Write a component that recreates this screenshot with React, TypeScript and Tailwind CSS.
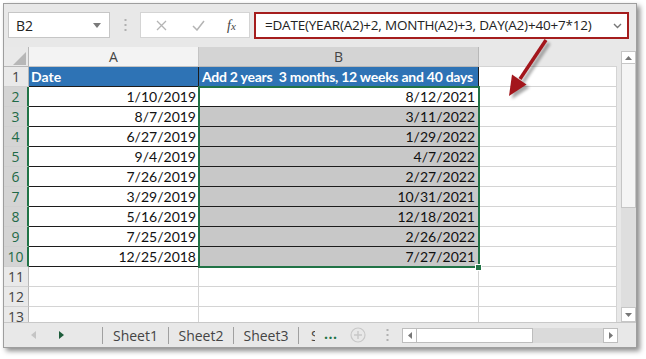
import React from "react"

const ui = { fontFamily: '"Open Sans", "Noto Sans", sans-serif' }
const cell = { fontFamily: 'Lato, "Liberation Sans", sans-serif' }

const rows: [string, string][] = [
  ["1/10/2019", "8/12/2021"],
  ["8/7/2019", "3/11/2022"],
  ["6/27/2019", "1/29/2022"],
  ["9/4/2019", "4/7/2022"],
  ["7/26/2019", "2/27/2022"],
  ["3/29/2019", "10/31/2021"],
  ["5/16/2019", "12/18/2021"],
  ["7/25/2019", "2/26/2022"],
  ["12/25/2018", "7/27/2021"],
]

function Toolbar() {
  return (
    <div className="h-[43px] shrink-0 flex items-start pt-[8px] pl-[4px]" style={ui}>
      {/* name box */}
      <div className="w-[102px] h-[26px] bg-white border border-[#c6c6c6] flex items-center justify-between pl-[7px] pr-[8px]">
        <span className="text-[14px] text-[#222]">B2</span>
        <svg width="8" height="5" viewBox="0 0 8 5"><path d="M0 0h8L4 5z" fill="#7a7a7a" /></svg>
      </div>
      <div className="w-[30px] h-[26px] flex items-center justify-center">
        <svg width="3" height="12" viewBox="0 0 3 12">
          <rect x="0.5" y="0" width="2" height="2" fill="#b0b0b0" />
          <rect x="0.5" y="5" width="2" height="2" fill="#b0b0b0" />
          <rect x="0.5" y="10" width="2" height="2" fill="#b0b0b0" />
        </svg>
      </div>
      {/* cancel / enter / fx */}
      <div className="w-[110px] h-[26px] bg-white border border-[#d4d4d4] flex items-center">
        <svg className="ml-[15px]" width="11" height="11" viewBox="0 0 11 11">
          <path d="M1 1l9 9M10 1l-9 9" stroke="#b4b4b4" strokeWidth="1.3" />
        </svg>
        <svg className="ml-[25px]" width="13" height="11" viewBox="0 0 13 11">
          <path d="M1 6l4 4 7-9" stroke="#b4b4b4" strokeWidth="1.5" fill="none" />
        </svg>
        <span className="ml-[22px] text-[14px] italic text-[#444]" style={{ fontFamily: '"Liberation Serif", serif' }}>
          f<span className="text-[11px]">x</span>
        </span>
      </div>
      {/* formula */}
      <div className="ml-[4px] w-[375px] h-[27px] bg-white border-2 border-[#a51d1d] flex items-center justify-between pl-[9px] pr-[5px]">
        <span className="text-[13.5px] text-[#222] tracking-[-0.2px]">=DATE(YEAR(A2)+2, MONTH(A2)+3, DAY(A2)+40+7*12)</span>
        <svg width="9" height="6" viewBox="0 0 9 6"><path d="M1 1l3.5 3.5L8 1" stroke="#777" strokeWidth="1.4" fill="none" /></svg>
      </div>
    </div>
  )
}

function RowHead({ n, sel }: { n: number; sel?: boolean }) {
  return (
    <div
      className={`flex items-center justify-center text-[14px] border-b border-[#d0d0d0] ${
        sel ? "bg-[#d4d4d4] text-[#1f6a47] border-r-2 border-r-[#217346]" : "bg-[#e9e9e9] text-[#444] border-r border-r-[#b8b8b8]"
      }`}
      style={ui}
    >
      {n}
    </div>
  )
}

function Sheet() {
  return (
    <div className="relative w-[613px] h-[275px] overflow-hidden grid grid-cols-[25px_170px_280px_138px] auto-rows-[20px] content-start">
      {/* header row */}
      <div className="relative bg-[#e9e9e9] border-r border-b border-[#b8b8b8]">
        <svg className="absolute left-[9px] top-[5px]" width="14" height="14" viewBox="0 0 14 14"><path d="M0 13h13V0z" fill="#b7b7b7" /></svg>
      </div>
      <div className="bg-[#f3f3f3] border-r border-b border-[#c4c4c4] flex items-center justify-center text-[14px] text-[#444]" style={ui}>A</div>
      <div className="bg-[#d4d4d4] border-r border-b border-[#b8b8b8] flex items-center justify-center text-[14px] text-[#444]" style={ui}>B</div>
      <div className="border-b border-[#d4d4d4]" />

      {/* row 1 */}
      <RowHead n={1} />
      <div className="bg-[#2e73b5] border-r border-b border-[#1c1c1c] flex items-center pl-[2px] text-[14px] font-bold text-white" style={cell}>Date</div>
      <div className="bg-[#2e73b5] border-r border-b border-[#1c1c1c] flex items-center pl-[3px] text-[14px] font-bold text-white whitespace-pre tracking-[-0.25px]" style={cell}>Add 2 years  3 months, 12 weeks and 40 days</div>
      <div className="bg-white border-r border-b border-[#d4d4d4]" />

      {rows.map(([a, b], i) => (
        <React.Fragment key={i}>
          <RowHead n={i + 2} sel />
          <div className="bg-white border-r border-b border-[#1c1c1c] flex items-center justify-end pr-[2px] text-[14px] text-[#111]" style={cell}>{a}</div>
          <div className={`${i === 0 ? "bg-white" : "bg-[#c8c8c8]"} border-r border-b border-[#1c1c1c] flex items-center justify-end pr-[3px] text-[14px] text-[#111]`} style={cell}>{b}</div>
          <div className="bg-white border-r border-b border-[#d4d4d4]" />
        </React.Fragment>
      ))}

      {[11, 12, 13].map((n) => (
        <React.Fragment key={n}>
          <RowHead n={n} />
          <div className="bg-white border-r border-b border-[#d4d4d4]" />
          <div className="bg-white border-r border-b border-[#d4d4d4]" />
          <div className="bg-white border-r border-b border-[#d4d4d4]" />
        </React.Fragment>
      ))}

      {/* selection B2:B10 */}
      <div className="absolute left-[194px] top-[39px] w-[282px] h-[182px] border-2 border-[#217346] pointer-events-none" />
      <div className="absolute left-[471px] top-[217px] w-[7px] h-[7px] bg-[#217346] border border-white pointer-events-none" />
    </div>
  )
}

function VScroll() {
  return (
    <div className="ml-[4px] mt-[4px] w-[15px] h-[271px] flex flex-col bg-[#dedede]">
      <div className="h-[13px] bg-white border border-[#c6c6c6] flex items-center justify-center">
        <svg width="7" height="4" viewBox="0 0 7 4"><path d="M0 4h7L3.5 0z" fill="#777" /></svg>
      </div>
      <div className="h-[144px] bg-[#f5f5f5] border border-t-0 border-[#c6c6c6]" />
      <div className="flex-1" />
      <div className="h-[15px] bg-white border border-[#c6c6c6] flex items-center justify-center">
        <svg width="7" height="4" viewBox="0 0 7 4"><path d="M0 0h7L3.5 4z" fill="#777" /></svg>
      </div>
    </div>
  )
}

function Sep() {
  return <div className="w-px h-[17px] bg-[#a0a0a0]" />
}

function TabBar() {
  return (
    <div className="h-[25px] shrink-0 border-t border-[#c8c8c8] flex items-center text-[14px] text-[#444]" style={ui}>
      <svg className="ml-[27px]" width="5" height="8" viewBox="0 0 5 8"><path d="M5 0v8L0 4z" fill="#c4c4c4" /></svg>
      <svg className="ml-[23px]" width="5" height="8" viewBox="0 0 5 8"><path d="M0 0v8l5-4z" fill="#1d5c3a" /></svg>
      <div className="ml-[38px]"><Sep /></div>
      <span className="w-[65px] text-center">Sheet1</span>
      <Sep />
      <span className="w-[64px] text-center">Sheet2</span>
      <Sep />
      <span className="w-[64px] text-center">Sheet3</span>
      <Sep />
      <span className="ml-[12px] w-[4px] overflow-hidden">S</span>
      <span className="ml-[9px] text-[#217346] font-bold tracking-[0.5px] leading-none -mt-[2px]">...</span>
      <svg className="ml-[13px]" width="16" height="16" viewBox="0 0 16 16">
        <circle cx="8" cy="8" r="7" stroke="#c8c8c8" strokeWidth="1.2" fill="none" />
        <path d="M8 4v8M4 8h8" stroke="#c8c8c8" strokeWidth="1.4" />
      </svg>
      <svg className="ml-[20px]" width="3" height="12" viewBox="0 0 3 12">
        <rect x="0.5" y="0" width="2" height="2" fill="#b0b0b0" />
        <rect x="0.5" y="5" width="2" height="2" fill="#b0b0b0" />
        <rect x="0.5" y="10" width="2" height="2" fill="#b0b0b0" />
      </svg>
      {/* horizontal scroll */}
      <div className="ml-[13px] w-[216px] h-[15px] flex bg-[#dadada]">
        <div className="w-[15px] bg-white border border-[#bdbdbd] flex items-center justify-center">
          <svg width="4" height="7" viewBox="0 0 4 7"><path d="M4 0v7L0 3.5z" fill="#777" /></svg>
        </div>
        <div className="w-[116px] bg-white border border-l-0 border-[#bdbdbd]" />
        <div className="flex-1" />
        <div className="w-[15px] bg-white border border-[#bdbdbd] flex items-center justify-center">
          <svg width="4" height="7" viewBox="0 0 4 7"><path d="M0 0v7l4-3.5z" fill="#777" /></svg>
        </div>
      </div>
    </div>
  )
}

export default function App() {
  return (
    <div className="relative w-[646px] h-[359px] bg-white overflow-hidden">
      <div className="ml-[3px] mt-[3px] w-[634px] h-[345px] border border-[#9e9e9e] bg-[#e8e8e8] shadow-[3px_3px_5px_rgba(0,0,0,0.45)] flex flex-col">
        <Toolbar />
        <div className="flex h-[275px] shrink-0">
          <Sheet />
          <VScroll />
        </div>
        <TabBar />
      </div>

      {/* red callout arrow */}
      <svg className="absolute left-0 top-0 pointer-events-none" width="646" height="359" viewBox="0 0 646 359">
        <defs>
          <filter id="sh" x="-50%" y="-50%" width="200%" height="200%">
            <feGaussianBlur stdDeviation="1.5" />
          </filter>
        </defs>
        <g transform="translate(3 3)" opacity="0.35" filter="url(#sh)">
          <path d="M546 40L520 79" stroke="#000" strokeWidth="3.5" />
          <path d="M509 96L526.5 84.5L512 74.5z" fill="#000" />
        </g>
        <path d="M546 40L520 79" stroke="#a3161c" strokeWidth="3.5" />
        <path d="M509 96L526.5 84.5L512 74.5z" fill="#a3161c" />
      </svg>
    </div>
  )
}
